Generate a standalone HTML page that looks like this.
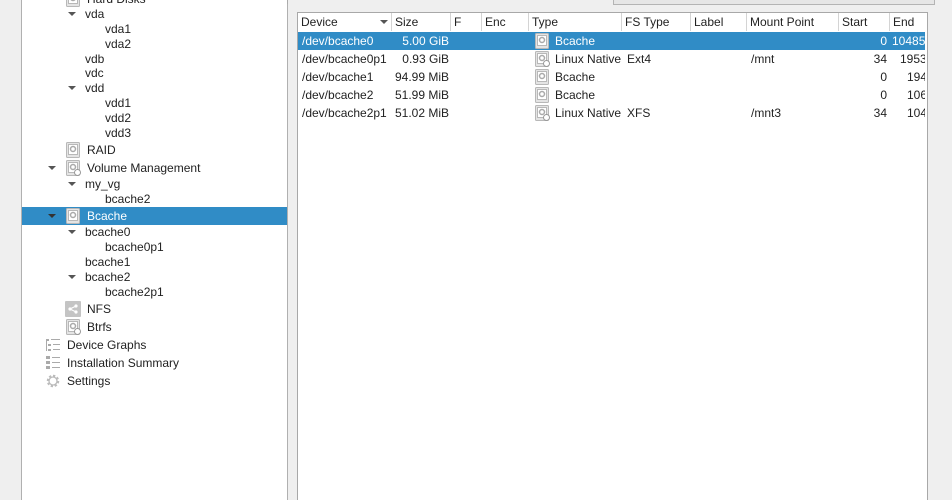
<!DOCTYPE html>
<html style="overflow:hidden;height:500px"><head><style>
html,body{overflow:hidden;height:500px}
body{margin:0;width:952px;background:#efefef;font-family:"Liberation Sans",sans-serif;font-size:12px;color:#222;position:relative}
.a{position:absolute;white-space:nowrap;line-height:15px}
.tri{position:absolute;width:0;height:0;border-left:4px solid transparent;border-right:4px solid transparent;border-top:4px solid #555}
svg{position:absolute}
.hd{position:absolute;top:0;height:18px;line-height:18px;border-right:1px solid #d4d4d4;padding-left:3px;box-sizing:border-box;white-space:nowrap}
.r{position:absolute;left:0;width:627px;height:18px;line-height:18px}
.c{position:absolute;top:0;white-space:nowrap}
.rt{text-align:right}
</style></head><body>
<svg width="0" height="0"><defs>
<symbol id="dk" viewBox="0 0 16 16"><rect x="1.5" y="0.5" width="13" height="15" rx="1" fill="#e4e4e4" stroke="#b8b8b8"/><rect x="3.5" y="2.5" width="9" height="10" fill="#fff" stroke="#b8b8b8"/><circle cx="8" cy="7" r="2.5" fill="none" stroke="#aaa" stroke-width="1.5"/></symbol>
<symbol id="dk2" viewBox="0 0 16 16"><rect x="1.5" y="0.5" width="13" height="15" rx="1" fill="#e4e4e4" stroke="#b8b8b8"/><rect x="3.5" y="2.5" width="9" height="10" fill="#fff" stroke="#b8b8b8"/><circle cx="8" cy="7" r="2.5" fill="none" stroke="#aaa" stroke-width="1.5"/><circle cx="12.5" cy="12.5" r="3" fill="#fff" stroke="#999"/></symbol>
</defs></svg>
<div style="position:absolute;left:21px;top:-2px;width:265px;height:510px;background:#fff;border:1px solid #b0b0b0"></div>
<svg style="left:65px;top:-9px" width="16" height="16"><use href="#dk"/></svg>
<div class="a" style="left:87px;top:-8px">Hard Disks</div>
<div class="tri" style="left:68px;top:12px"></div><div class="a" style="left:85px;top:7px">vda</div>
<div class="a" style="left:105px;top:22px">vda1</div>
<div class="a" style="left:105px;top:37px">vda2</div>
<div class="a" style="left:85px;top:52px">vdb</div>
<div class="a" style="left:85px;top:66px">vdc</div>
<div class="tri" style="left:68px;top:86px"></div><div class="a" style="left:85px;top:81px">vdd</div>
<div class="a" style="left:105px;top:96px">vdd1</div>
<div class="a" style="left:105px;top:111px">vdd2</div>
<div class="a" style="left:105px;top:126px">vdd3</div>
<svg style="left:65px;top:142px" width="16" height="16"><use href="#dk"/></svg><div class="a" style="left:87px;top:143px">RAID</div>
<div class="tri" style="left:48px;top:166px"></div><svg style="left:65px;top:160px" width="16" height="16"><use href="#dk2"/></svg><div class="a" style="left:87px;top:161px">Volume Management</div>
<div class="tri" style="left:68px;top:182px"></div><div class="a" style="left:85px;top:177px">my_vg</div>
<div class="a" style="left:105px;top:192px">bcache2</div>
<div style="position:absolute;left:22px;top:207px;width:265px;height:18px;background:#308cc6"></div>
<div class="tri" style="left:48px;top:214px;border-top-color:#333"></div><svg style="left:65px;top:208px" width="16" height="16"><use href="#dk"/></svg><div class="a" style="left:87px;top:209px;color:#fff">Bcache</div>
<div class="tri" style="left:68px;top:230px"></div><div class="a" style="left:85px;top:225px">bcache0</div>
<div class="a" style="left:105px;top:240px">bcache0p1</div>
<div class="a" style="left:85px;top:255px">bcache1</div>
<div class="tri" style="left:68px;top:275px"></div><div class="a" style="left:85px;top:270px">bcache2</div>
<div class="a" style="left:105px;top:285px">bcache2p1</div>
<svg style="left:65px;top:301px" width="16" height="16"><rect x="0" y="0" width="16" height="16" rx="1" fill="#c4c4c4"/><circle cx="5" cy="8" r="1.6" fill="#fff"/><circle cx="11" cy="5" r="1.6" fill="#fff"/><circle cx="11" cy="11" r="1.6" fill="#fff"/><path d="M5 8L11 5M5 8L11 11" stroke="#fff"/></svg><div class="a" style="left:87px;top:302px">NFS</div>
<svg style="left:65px;top:319px" width="16" height="16"><use href="#dk2"/></svg><div class="a" style="left:87px;top:320px">Btrfs</div>
<svg style="left:46px;top:338px" width="15" height="15"><g fill="#aaa"><rect x="0" y="1" width="3" height="2"/><rect x="5" y="1" width="9" height="1"/><rect x="2" y="6" width="3" height="2"/><rect x="7" y="6" width="7" height="1"/><rect x="2" y="11" width="3" height="2"/><rect x="7" y="11" width="7" height="1"/><rect x="0" y="3" width="1" height="10"/></g></svg><div class="a" style="left:67px;top:338px">Device Graphs</div>
<svg style="left:46px;top:356px" width="15" height="15"><g fill="#aaa"><rect x="0" y="0" width="4" height="3"/><rect x="6" y="1" width="8" height="1"/><rect x="0" y="5" width="4" height="3"/><rect x="6" y="6" width="8" height="1"/><rect x="0" y="10" width="4" height="3"/><rect x="6" y="11" width="8" height="1"/></g></svg><div class="a" style="left:67px;top:356px">Installation Summary</div>
<svg style="left:45px;top:373px" width="16" height="16"><circle cx="8" cy="8" r="5" fill="none" stroke="#bbb" stroke-width="2.5" stroke-dasharray="2.2 1.7"/><circle cx="8" cy="8" r="4" fill="none" stroke="#bbb" stroke-width="1.3"/></svg><div class="a" style="left:67px;top:374px">Settings</div>
<div style="position:absolute;left:287px;top:-2px;width:1px;height:6px;background:#aaa"></div>
<div style="position:absolute;left:613px;top:-2px;width:320px;height:5px;background:#e6e6e6;border:1px solid #b4b4b4"></div>
<div style="position:absolute;left:297px;top:12px;width:629px;height:500px;background:#fff;border:1px solid #a8a8a8"></div>
<div style="position:absolute;left:298px;top:13px;width:628px;height:19px;background:#fff;overflow:hidden">
<div class="hd" style="left:0;width:94px">Device</div>
<div class="tri" style="left:82px;top:7px"></div>
<div class="hd" style="left:94px;width:59px">Size</div>
<div class="hd" style="left:153px;width:31px">F</div>
<div class="hd" style="left:184px;width:47px">Enc</div>
<div class="hd" style="left:231px;width:93px">Type</div>
<div class="hd" style="left:324px;width:69px">FS Type</div>
<div class="hd" style="left:393px;width:56px">Label</div>
<div class="hd" style="left:449px;width:92px">Mount Point</div>
<div class="hd" style="left:541px;width:51px">Start</div>
<div class="hd" style="left:592px;width:40px">End</div>
</div>
<div style="position:absolute;left:298px;top:32px;width:627px;height:100px;overflow:hidden">
<div class="r" style="top:0;background:#308cc6;color:#fff">
<span class="c" style="left:4px">/dev/bcache0</span><span class="c rt" style="left:94px;width:57px">5.00 GiB</span>
<svg style="left:236px;top:1px" width="16" height="16"><use href="#dk"/></svg><span class="c" style="left:257px">Bcache</span>
<span class="c rt" style="left:541px;width:48px">0</span><span class="c" style="left:594px">10485</span></div>
<div class="r" style="top:18px">
<span class="c" style="left:4px">/dev/bcache0p1</span><span class="c rt" style="left:94px;width:57px">0.93 GiB</span>
<svg style="left:236px;top:1px" width="16" height="16"><use href="#dk2"/></svg><span class="c" style="left:257px">Linux Native</span><span class="c" style="left:329px">Ext4</span><span class="c" style="left:453px">/mnt</span>
<span class="c rt" style="left:541px;width:48px">34</span><span class="c" style="left:602px">1953</span></div>
<div class="r" style="top:36px">
<span class="c" style="left:4px">/dev/bcache1</span><span class="c rt" style="left:94px;width:57px">94.99 MiB</span>
<svg style="left:236px;top:1px" width="16" height="16"><use href="#dk"/></svg><span class="c" style="left:257px">Bcache</span>
<span class="c rt" style="left:541px;width:48px">0</span><span class="c" style="left:609px">194</span></div>
<div class="r" style="top:54px">
<span class="c" style="left:4px">/dev/bcache2</span><span class="c rt" style="left:94px;width:57px">51.99 MiB</span>
<svg style="left:236px;top:1px" width="16" height="16"><use href="#dk"/></svg><span class="c" style="left:257px">Bcache</span>
<span class="c rt" style="left:541px;width:48px">0</span><span class="c" style="left:609px">106</span></div>
<div class="r" style="top:72px">
<span class="c" style="left:4px">/dev/bcache2p1</span><span class="c rt" style="left:94px;width:57px">51.02 MiB</span>
<svg style="left:236px;top:1px" width="16" height="16"><use href="#dk2"/></svg><span class="c" style="left:257px">Linux Native</span><span class="c" style="left:329px">XFS</span><span class="c" style="left:453px">/mnt3</span>
<span class="c rt" style="left:541px;width:48px">34</span><span class="c" style="left:609px">104</span></div>
</div>
</body></html>
